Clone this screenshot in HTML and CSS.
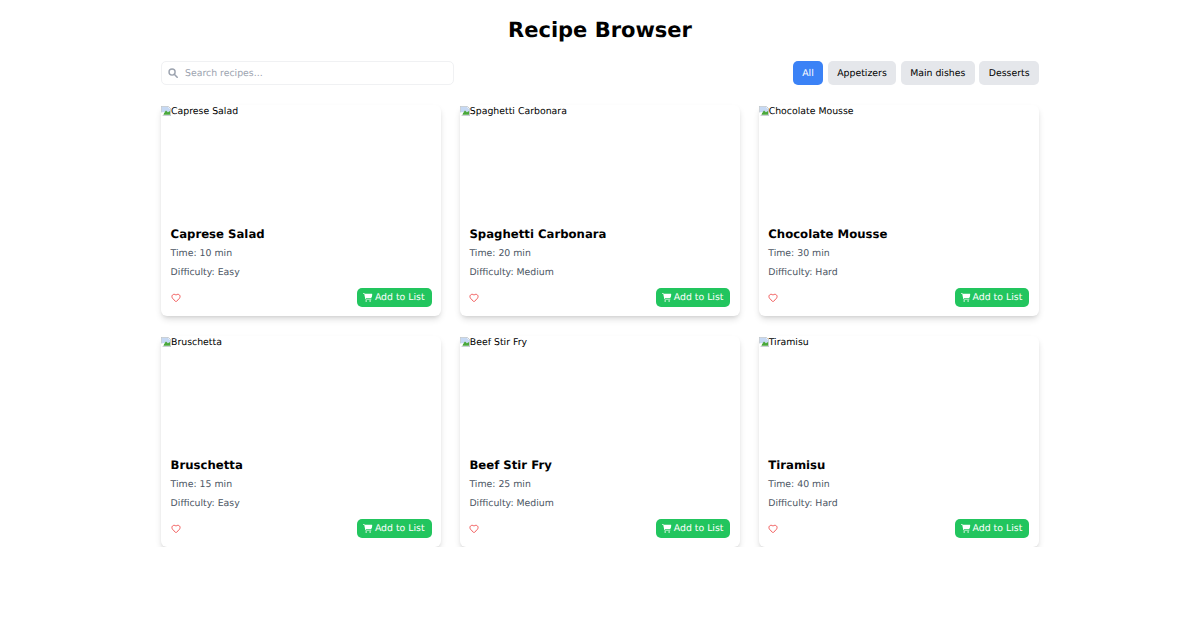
FILE: index.html
```html
<!DOCTYPE html>
<html lang="en">
<head>
    <meta charset="UTF-8">
    <title>Recipe Browser</title>
    <link rel="stylesheet" href="styles.css">
</head>
<body>
    <svg class="sprites" width="0" height="0" aria-hidden="true">
        <symbol id="broken" viewBox="0 0 16 16">
            <path d="M.5.5h11l4 4v11H.5z" fill="#fff" stroke="#98a3ae"/>
            <path d="M1.500 1.500h9.500l3.500 3.500v5L1.500 11z" fill="#c6d9f4"/>
            <path d="M4 12l4-5 3 3 3.500-2V14H4z" fill="#4aa83c"/>
            <path d="M0 16V10.500L6 9.500 2 16z" fill="#fff"/>
        </symbol>
        <symbol id="heart" viewBox="0 0 512 512">
            <path d="M256 448l-30-27C118 322 48 258 48 180c0-64 50-114 114-114 36 0 71 17 94 44 23-27 58-44 94-44 64 0 114 50 114 114 0 78-70 142-178 241z" fill="none" stroke="currentColor" stroke-width="44"/>
        </symbol>
        <symbol id="cart" viewBox="0 0 576 512">
            <path d="M0 24C0 11 11 0 24 0h45c22 0 41 12 51 32h411c26 0 45 25 38 50l-41 152c-8 28-33 48-62 48H173l5 29c2 11 12 19 24 19h288c13 0 24 11 24 24s-11 24-24 24H202c-35 0-65-25-71-59L79 55c-1-4-5-7-10-7H24C11 48 0 37 0 24z"/>
            <circle cx="192" cy="464" r="48"/>
            <circle cx="432" cy="464" r="48"/>
        </symbol>
    </svg>

    <main class="page">
        <h1>Recipe Browser</h1>

        <div class="toolbar">
            <label class="search">
                <svg class="search-icon" viewBox="0 0 512 512"><circle cx="208" cy="208" r="156" fill="none" stroke="currentColor" stroke-width="72"/><path d="M320 320l150 150" stroke="currentColor" stroke-width="80" stroke-linecap="round"/></svg>
                <input type="text" placeholder="Search recipes...">
            </label>
            <div class="filters">
                <button class="filter active">All</button>
                <button class="filter">Appetizers</button>
                <button class="filter">Main dishes</button>
                <button class="filter">Desserts</button>
            </div>
        </div>

        <div class="grid">
            <article class="card">
                <div class="photo"><svg class="broken"><use href="#broken"/></svg>Caprese Salad</div>
                <div class="body">
                    <h2>Caprese Salad</h2>
                    <p>Time: 10 min</p>
                    <p>Difficulty: Easy</p>
                    <div class="actions">
                        <svg class="heart"><use href="#heart"/></svg>
                        <button class="add"><svg class="cart"><use href="#cart"/></svg>Add to List</button>
                    </div>
                </div>
            </article>
            <article class="card">
                <div class="photo"><svg class="broken"><use href="#broken"/></svg>Spaghetti Carbonara</div>
                <div class="body">
                    <h2>Spaghetti Carbonara</h2>
                    <p>Time: 20 min</p>
                    <p>Difficulty: Medium</p>
                    <div class="actions">
                        <svg class="heart"><use href="#heart"/></svg>
                        <button class="add"><svg class="cart"><use href="#cart"/></svg>Add to List</button>
                    </div>
                </div>
            </article>
            <article class="card">
                <div class="photo"><svg class="broken"><use href="#broken"/></svg>Chocolate Mousse</div>
                <div class="body">
                    <h2>Chocolate Mousse</h2>
                    <p>Time: 30 min</p>
                    <p>Difficulty: Hard</p>
                    <div class="actions">
                        <svg class="heart"><use href="#heart"/></svg>
                        <button class="add"><svg class="cart"><use href="#cart"/></svg>Add to List</button>
                    </div>
                </div>
            </article>
            <article class="card">
                <div class="photo"><svg class="broken"><use href="#broken"/></svg>Bruschetta</div>
                <div class="body">
                    <h2>Bruschetta</h2>
                    <p>Time: 15 min</p>
                    <p>Difficulty: Easy</p>
                    <div class="actions">
                        <svg class="heart"><use href="#heart"/></svg>
                        <button class="add"><svg class="cart"><use href="#cart"/></svg>Add to List</button>
                    </div>
                </div>
            </article>
            <article class="card">
                <div class="photo"><svg class="broken"><use href="#broken"/></svg>Beef Stir Fry</div>
                <div class="body">
                    <h2>Beef Stir Fry</h2>
                    <p>Time: 25 min</p>
                    <p>Difficulty: Medium</p>
                    <div class="actions">
                        <svg class="heart"><use href="#heart"/></svg>
                        <button class="add"><svg class="cart"><use href="#cart"/></svg>Add to List</button>
                    </div>
                </div>
            </article>
            <article class="card">
                <div class="photo"><svg class="broken"><use href="#broken"/></svg>Tiramisu</div>
                <div class="body">
                    <h2>Tiramisu</h2>
                    <p>Time: 40 min</p>
                    <p>Difficulty: Hard</p>
                    <div class="actions">
                        <svg class="heart"><use href="#heart"/></svg>
                        <button class="add"><svg class="cart"><use href="#cart"/></svg>Add to List</button>
                    </div>
                </div>
            </article>
        </div>
    </main>
</body>
</html>
```

FILE: styles.css
```css
* { box-sizing: border-box; }
body {
    margin: 0;
    font-family: "DejaVu Sans", sans-serif;
    text-rendering: geometricPrecision;
    background-color: #fff;
    color: #000;
}
.sprites { position: absolute; }
.page { width: 878px; margin: 0 auto; padding-top: 18px; }
h1 { margin: 0 0 18px; font-size: 21px; line-height: 25px; font-weight: 700; text-align: center; }

.toolbar { display: flex; justify-content: space-between; align-items: center; margin-bottom: 20px; }
.search {
    display: flex;
    align-items: center;
    gap: 7px;
    width: 293px;
    height: 24px;
    padding: 0 6px;
    border: 1px solid #f0f1f3;
    border-radius: 5px;
    color: #9ca3af;
}
.search-icon { width: 10px; height: 10px; flex: none; }
.search input { flex: 1; min-width: 0; border: 0; outline: 0; padding: 0; font: 9.35px "DejaVu Sans", sans-serif; text-rendering: geometricPrecision; }
.search input::placeholder { color: #9ca3af; }

.filters { display: flex; gap: 4.500px; }
.filter {
    height: 24px;
    padding: 0 9.45px;
    border: 0;
    border-radius: 5px;
    background-color: #e5e7eb;
    color: #000;
    font: 9.35px "DejaVu Sans", sans-serif;
    text-rendering: geometricPrecision;
}
.filter.active { background-color: #3b82f6; color: #fff; }

.grid { display: grid; grid-template-columns: repeat(3, 1fr); gap: 20px 18.5px; }
.card {
    height: 211px;
    border-radius: 6px;
    background-color: #fff;
    box-shadow: 0 4px 7px -1px rgba(0,0,0,.14), 0 2px 4px -2px rgba(0,0,0,.12);
}
.photo { display: flex; align-items: flex-start; height: 108px; padding-top: 1px; font-size: 9.35px; line-height: 12px; overflow: hidden; }
.broken { width: 10px; height: 10px; flex: none; }
.body { padding: 9px 9.7px 9px 9.6px; }
h2 { margin: 4px 0 6px; font-size: 11.700px; line-height: 16px; font-weight: 700; }
.body p { margin: 0 0 7px; font-size: 9.35px; line-height: 12px; color: #4b5563; }
.actions { display: flex; justify-content: space-between; align-items: center; margin-top: 9px; }
.heart { width: 10px; height: 10px; color: #ef4444; }
.add {
    display: flex;
    align-items: center;
    gap: 2px;
    height: 19px;
    padding: 0 7px 0 6.5px;
    border: 0;
    border-radius: 5px;
    background-color: #22c55e;
    color: #fff;
    font: 9.35px "DejaVu Sans", sans-serif;
    text-rendering: geometricPrecision;
}
.cart { width: 9.5px; height: 9px; fill: #fff; }
```
